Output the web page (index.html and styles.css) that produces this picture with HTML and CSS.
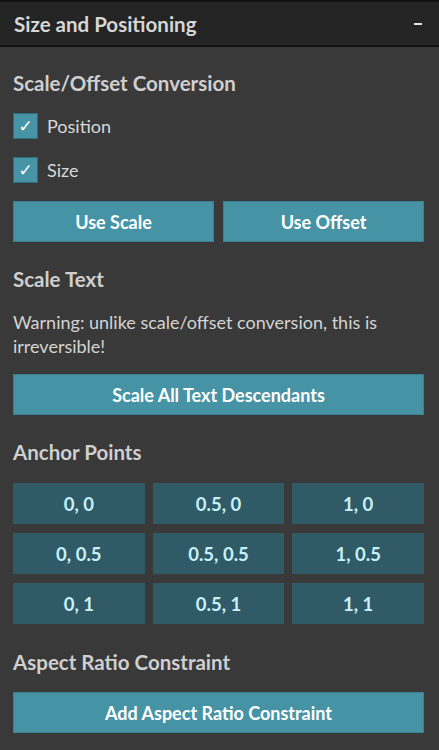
FILE: index.html
```html
<!DOCTYPE html>
<html>
<head>
<meta charset="utf-8">
<link rel="stylesheet" href="styles.css">
</head>
<body>
<div class="panel">
  <div class="header">
    <span class="title">Size and Positioning</span>
    <span class="minus"></span>
  </div>
  <div class="content">
    <h2 class="heading first">Scale/Offset Conversion</h2>
    <label class="check"><span class="box">✓</span><span>Position</span></label>
    <label class="check"><span class="box">✓</span><span>Size</span></label>
    <div class="row2">
      <button class="btn">Use Scale</button>
      <button class="btn">Use Offset</button>
    </div>

    <h2 class="heading">Scale Text</h2>
    <p class="warn">Warning: unlike scale/offset conversion, this is irreversible!</p>
    <button class="btn wide">Scale All Text Descendants</button>

    <h2 class="heading">Anchor Points</h2>
    <div class="grid">
      <button class="anchor">0, 0</button>
      <button class="anchor">0.5, 0</button>
      <button class="anchor">1, 0</button>
      <button class="anchor">0, 0.5</button>
      <button class="anchor">0.5, 0.5</button>
      <button class="anchor">1, 0.5</button>
      <button class="anchor">0, 1</button>
      <button class="anchor">0.5, 1</button>
      <button class="anchor">1, 1</button>
    </div>

    <h2 class="heading last">Aspect Ratio Constraint</h2>
    <button class="btn wide">Add Aspect Ratio Constraint</button>
  </div>
</div>
</body>
</html>
```
FILE: styles.css
```css
* { box-sizing: border-box; }
html, body {
  margin: 0;
  padding: 0;
  background: #393939;
  font-family: Lato, "Open Sans", sans-serif;
}
.panel {
  width: 439px;
  min-height: 750px;
  background: #393939;
  border-top: 2px solid #121212;
}
.header {
  height: 45px;
  background: #242424;
  border-bottom: 2px solid #121212;
  display: flex;
  align-items: center;
  justify-content: space-between;
  padding: 1px 17px 0 14px;
}
.title {
  color: #d6d6d6;
  font-weight: bold;
  font-size: 20.5px;
}
.minus {
  width: 8px;
  height: 2px;
  background: #e0e0e0;
}
.content {
  padding: 0 15px 0 13px;
}
.heading {
  margin: 0;
  color: #cfcfcf;
  font-size: 20.5px;
  font-weight: bold;
  line-height: 24px;
  padding-top: 25px;
  padding-bottom: 18px;
}
.heading.first { padding-top: 24px; }
.heading.last { padding-top: 26px; }
.check {
  display: flex;
  align-items: center;
  gap: 9px;
  color: #d8d8d8;
  font-size: 18px;
  height: 26px;
  margin-bottom: 18px;
}
.box {
  width: 25px;
  height: 26px;
  background: #4794a6;
  border: 1px solid #2f6d7c;
  color: #ffffff;
  display: flex;
  align-items: center;
  justify-content: center;
  font-size: 17px;
  font-family: "DejaVu Sans", sans-serif;
}
.row2 {
  display: grid;
  grid-template-columns: 1fr 1fr;
  gap: 9px;
}
.btn {
  display: block;
  height: 41px;
  background: #4793a6;
  border: 1px solid #3b8091;
  color: #ffffff;
  font-family: inherit;
  font-weight: bold;
  font-size: 18px;
  padding: 0;
  width: 100%;
}
.warn {
  margin: 1px 0 16px;
  color: #d4d4d4;
  font-size: 18px;
  line-height: 24px;
}
.grid {
  display: grid;
  grid-template-columns: repeat(3, 1fr);
  gap: 9px 8px;
  margin-top: 1px;
}
.anchor {
  height: 41px;
  background: #2f5a66;
  border: none;
  color: #c8f1f9;
  font-family: inherit;
  font-weight: bold;
  font-size: 18.5px;
  padding: 0;
}
```
